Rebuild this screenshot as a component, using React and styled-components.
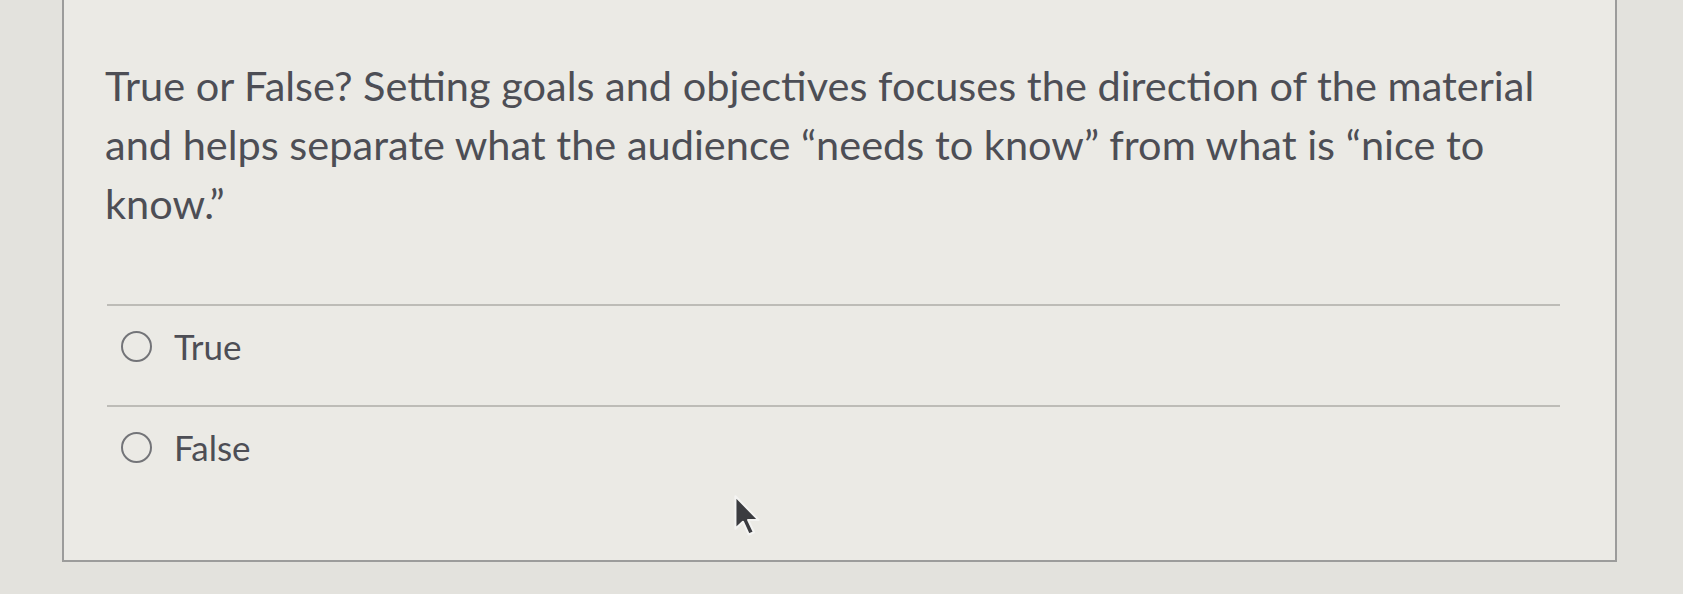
import React from 'react'
import styled, { createGlobalStyle } from 'styled-components'

const GlobalStyle = createGlobalStyle`
  html, body {
    margin: 0;
    padding: 0;
    background: #e3e2dd;
    font-family: Lato, 'Open Sans', sans-serif;
    overflow: hidden;
  }
`

const Page = styled.div`
  position: relative;
  width: 1683px;
  height: 594px;
  padding-left: 62px;
  box-sizing: border-box;
`

const Card = styled.div`
  width: 1555px;
  height: 562px;
  box-sizing: border-box;
  background: #ebeae5;
  border: 2px solid #9c9c9b;
  border-top: none;
  padding: 56px 55px 0 41px;
`

const Question = styled.div`
  width: 1460px;
  font-size: 41.5px;
  line-height: 59px;
  color: #4d4e55;
`

const Answers = styled.div`
  margin-top: 71px;
  margin-left: 2px;
`

const Row = styled.label`
  display: flex;
  align-items: flex-start;
  border-top: 2px solid #bdbcb7;
  height: ${p => p.h}px;
  padding-top: 25px;
  box-sizing: border-box;
`

const Radio = styled.span`
  width: 31px;
  height: 31px;
  box-sizing: border-box;
  border: 2.5px solid #737478;
  border-radius: 50%;
  margin-left: 14px;
  margin-right: 22px;
  flex-shrink: 0;
`

const Label = styled.span`
  font-size: 35px;
  line-height: 31px;
  color: #4d4e55;
`

const Cursor = styled.svg`
  position: absolute;
  left: 733px;
  top: 494px;
`

export default function App() {
  return (
    <>
      <GlobalStyle />
      <Page>
        <Card>
          <Question>
            True or False? Setting goals and objectives focuses the direction of the material
            and helps separate what the audience “needs to know” from what is “nice to know.”
          </Question>
          <Answers>
            <Row h={101}>
              <Radio />
              <Label>True</Label>
            </Row>
            <Row h={100}>
              <Radio />
              <Label>False</Label>
            </Row>
          </Answers>
        </Card>
        <Cursor width="28" height="44" viewBox="0 0 24 38">
          <path
            d="M2 2 L2 30 L8.5 24 L13.5 35 L18 33 L13 22.5 L22 22.5 Z"
            fill="#3b3c40"
            stroke="#f4f4f2"
            strokeWidth="1.8"
            strokeLinejoin="round"
          />
        </Cursor>
      </Page>
    </>
  )
}
